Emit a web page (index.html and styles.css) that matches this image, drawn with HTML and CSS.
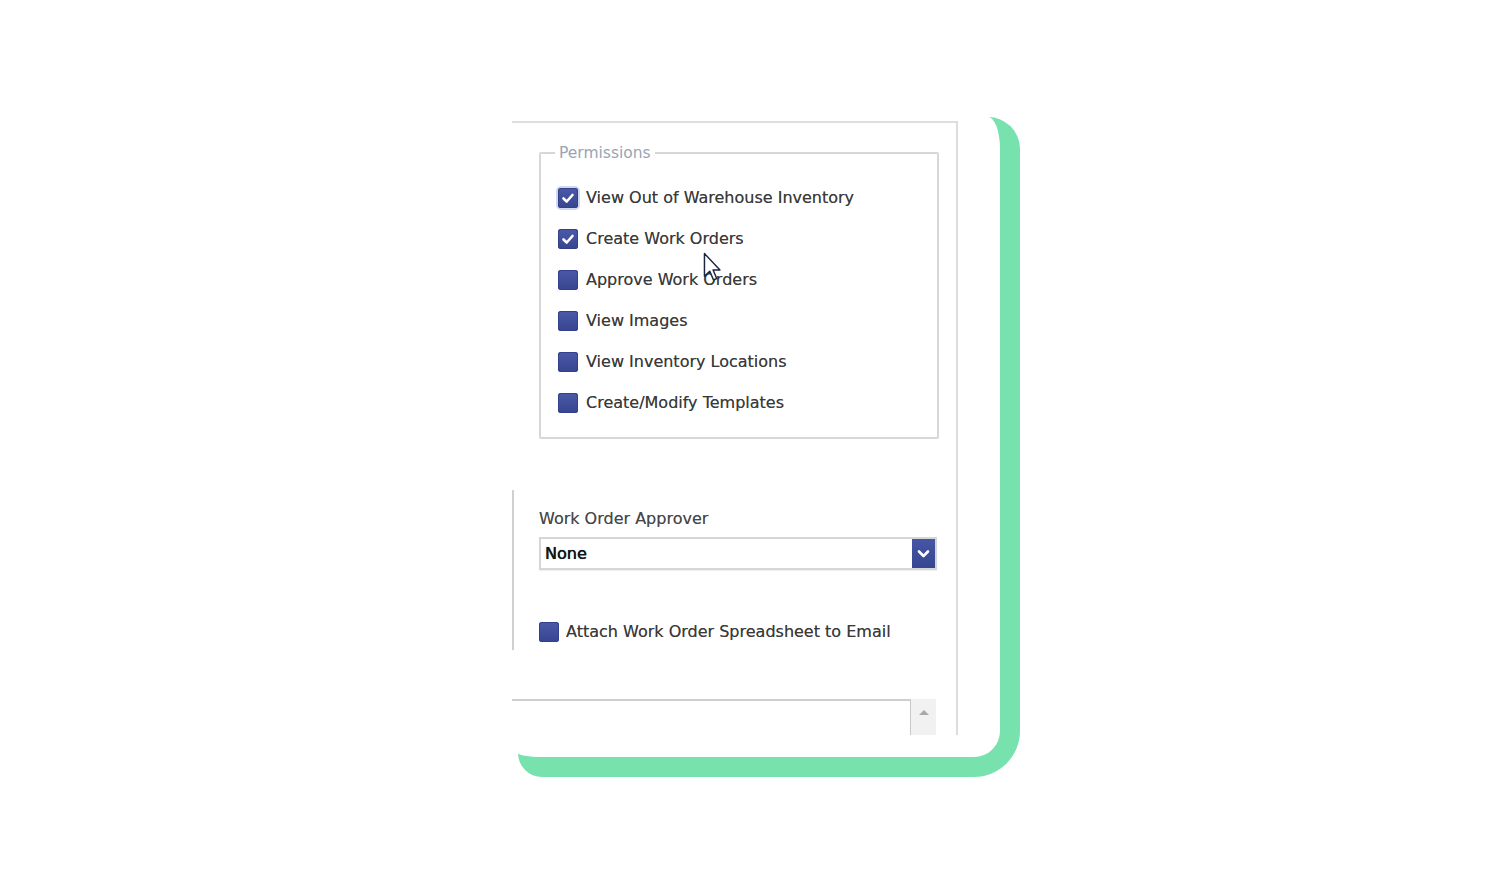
FILE: index.html
```html
<!DOCTYPE html>
<html>
<head>
<meta charset="utf-8">
<title>Permissions</title>
<link rel="stylesheet" href="styles.css">
</head>
<body>
<div class="stage">
  <div class="frame">
    <div class="panel">
      <div class="fieldset">
        <span class="legend">Permissions</span>
        <div class="rows">
          <div class="row">
            <span class="cb checked focus"><svg viewBox="0 0 20 20" width="20" height="20"><path d="M5.5 10.5 L8.7 13.5 L14.5 7" fill="none" stroke="#fff" stroke-width="2.6" stroke-linecap="round" stroke-linejoin="round"/></svg></span>
            <span class="lbl">View Out of Warehouse Inventory</span>
          </div>
          <div class="row">
            <span class="cb checked"><svg viewBox="0 0 20 20" width="20" height="20"><path d="M5.5 10.5 L8.7 13.5 L14.5 7" fill="none" stroke="#fff" stroke-width="2.6" stroke-linecap="round" stroke-linejoin="round"/></svg></span>
            <span class="lbl">Create Work Orders</span>
          </div>
          <div class="row">
            <span class="cb"></span>
            <span class="lbl">Approve Work Orders</span>
          </div>
          <div class="row">
            <span class="cb"></span>
            <span class="lbl">View Images</span>
          </div>
          <div class="row">
            <span class="cb"></span>
            <span class="lbl">View Inventory Locations</span>
          </div>
          <div class="row">
            <span class="cb"></span>
            <span class="lbl">Create/Modify Templates</span>
          </div>
        </div>
      </div>

      <div class="lower">
        <div class="field-label">Work Order Approver</div>
        <div class="select">
          <span class="select-text">None</span>
          <span class="select-btn"><svg viewBox="0 0 23 29" width="23" height="29"><path d="M7 12.5 L11.5 17 L16 12.5" fill="none" stroke="#fff" stroke-width="2.6" stroke-linecap="round" stroke-linejoin="round"/></svg></span>
        </div>
        <div class="attach">
          <span class="cb"></span>
          <span class="lbl">Attach Work Order Spreadsheet to Email</span>
        </div>
      </div>

      <div class="bottom">
        <div class="textbox"></div>
        <div class="scroll"><span class="arrow-up"></span></div>
      </div>

      <svg class="cursor" viewBox="0 0 13 21" width="19" height="31">
        <path d="M1 1 L1 16.5 L4.6 13 L7.2 19 L9.4 18 L6.9 12.2 L11.6 12.2 Z" fill="#fff" stroke="#1d2440" stroke-width="1" stroke-linejoin="round"/>
      </svg>
    </div>
  </div>
</div>
</body>
</html>
```

FILE: styles.css
```css
html, body {
  margin: 0;
  padding: 0;
  background: #ffffff;
}

body {
  font-family: "DejaVu Sans", "Liberation Sans", sans-serif;
  color: #3e3e3e;
}

.stage {
  padding-top: 117px;
  padding-left: 518px;
}

.frame {
  width: 482px;
  height: 636px;
  padding-top: 4px;
  border-right: 20px solid #77e2ad;
  border-bottom: 20px solid #77e2ad;
  border-radius: 0 32px 46px 24px;
  background: #ffffff;
}

.panel {
  position: relative;
  margin-left: -6px;
  width: 446px;
  height: 614px;
  border-top: 2px solid #dedede;
  border-right: 2px solid #dcdcdc;
  box-sizing: border-box;
  overflow: hidden;
}

/* Permissions group */
.fieldset {
  margin-left: 27px;
  margin-top: 29px;
  width: 400px;
  height: 287px;
  border: 2px solid #d7d7d7;
  border-radius: 2px;
  box-sizing: border-box;
  box-shadow: 0 0 1px rgba(0,0,0,0.06);
}

.legend {
  display: block;
  width: fit-content;
  margin-left: 14px;
  margin-top: -11px;
  padding: 0 4px;
  height: 20px;
  line-height: 20px;
  background: #fff;
  font-size: 15.5px;
  color: #9aa4b4;
}

.rows {
  padding: 14px 0 0 17px;
}

.row {
  display: flex;
  align-items: center;
  height: 41px;
  gap: 8px;
}

.cb {
  display: block;
  flex: none;
  width: 20px;
  height: 20px;
  border-radius: 3px;
  background: linear-gradient(#4a5aa8, #37458f);
  box-shadow: inset 0 0 0 1px #34418a;
}

.cb svg {
  display: block;
}

.cb.focus {
  box-shadow: inset 0 0 0 1px #34418a, 0 0 0 2px #cfd8ee;
}

.lbl {
  font-size: 16px;
  line-height: 20px;
  color: #3a3a3a;
  white-space: nowrap;
  text-shadow: 0 0 0.6px rgba(40,40,40,0.6);
}

/* Lower section */
.lower {
  margin-top: 51px;
  height: 160px;
  border-left: 2px solid #d0d0d0;
  padding-left: 25px;
  box-sizing: border-box;
  padding-top: 19px;
}

.field-label {
  font-size: 16px;
  line-height: 20px;
  color: #474747;
  text-shadow: 0 0 0.6px rgba(40,40,40,0.5);
}

.select {
  display: flex;
  align-items: center;
  justify-content: space-between;
  margin-top: 8px;
  width: 398px;
  height: 33px;
  border: 2px solid #d6d6d6;
  box-sizing: border-box;
  padding: 0 0 0 4px;
  box-shadow: 0 1px 1px rgba(0,0,0,0.05);
}

.select-text {
  font-size: 16px;
  color: #151515;
  text-shadow: 0 0 0.8px rgba(0,0,0,0.8), 0.3px 0 0 rgba(0,0,0,0.6);
}

.select-btn {
  display: block;
  width: 23px;
  height: 29px;
  background: linear-gradient(#4656a6, #384690);
}

.select-btn svg {
  display: block;
}

.attach {
  display: flex;
  align-items: center;
  gap: 7px;
  margin-top: 52px;
  height: 20px;
}

/* Bottom text box */
.bottom {
  display: flex;
  margin-top: 49px;
  height: 40px;
}

.textbox {
  width: 399px;
  border-top: 2px solid #cfcfcf;
  border-right: 1px solid #c8c8c8;
  box-sizing: border-box;
}

.scroll {
  width: 25px;
  background: #f1f1f1;
  display: flex;
  justify-content: center;
  padding-top: 11px;
  box-sizing: border-box;
}

.arrow-up {
  display: block;
  width: 0;
  height: 0;
  border-left: 5px solid transparent;
  border-right: 5px solid transparent;
  border-bottom: 5px solid #a9a9a9;
}

.cursor {
  position: absolute;
  left: 191px;
  top: 129px;
}
```
